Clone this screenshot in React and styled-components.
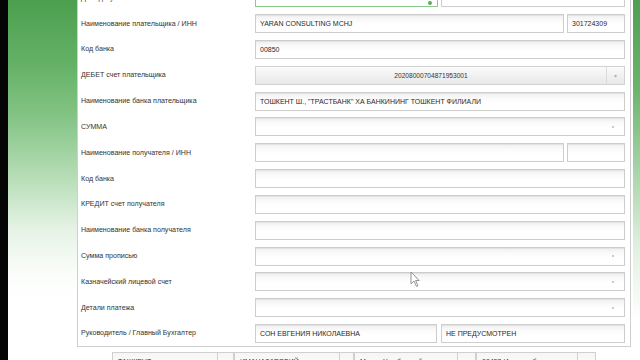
import React from "react";
import styled, { createGlobalStyle } from "styled-components";

const Global = createGlobalStyle`
  html, body { margin: 0; padding: 0; background: #fff; }
  body { width: 640px; height: 360px; overflow: hidden; font-family: "Liberation Sans", Arial, sans-serif; }
`;

const Screen = styled.div`
  position: relative;
  display: flex;
  width: 640px;
  height: 360px;
  overflow: hidden;
  background: #fff;
`;

const BlackEdge = styled.div`
  width: 8px;
  flex: none;
  background: #050505;
`;

const Sidebar = styled.div`
  width: 69px;
  flex: none;
  background: linear-gradient(180deg, #4c9f4f 0px, #62b064 60px, #86c587 120px, #b9deb9 180px, #e6f3e6 230px, #fbfdfb 275px, #ffffff 300px);
`;

const RightEdge = styled.div`
  width: 7px;
  flex: none;
  background: linear-gradient(180deg, #4f9f52 0px, #6db46f 90px, #a6d5a7 170px, #e2f1e2 250px, #ffffff 320px);
`;

const Main = styled.div`
  flex: 1;
  display: flex;
  flex-direction: column;
  min-width: 0;
`;

const Panel = styled.div`
  margin-top: -15.2px;
  margin-right: 2px;
  border: 1px solid #cfcfcf;
  border-top: none;
  padding: 0 5px 0 3px;
  display: grid;
  grid-auto-rows: 25.83px;
  background: #fff;
`;

const Row = styled.div`
  display: grid;
  grid-template-columns: 174px 1fr;
  align-items: center;
`;

const Label = styled.div`
  font-size: 7.1px;
  color: #333;
  white-space: nowrap;
`;

const Fields = styled.div`
  display: flex;
  gap: ${(p) => p.$gap || 3}px;
  height: 19px;
`;

const Input = styled.div`
  flex: ${(p) => (p.$w ? `0 0 ${p.$w}px` : "1")};
  box-sizing: border-box;
  height: 19px;
  display: flex;
  align-items: center;
  justify-content: space-between;
  padding: 0 10px 0 4px;
  border: 1px solid ${(p) => (p.$focus ? "#8cc98c" : "#cdcdcd")};
  background: linear-gradient(180deg, #efefef 0px, #fafafa 5px, #ffffff 10px);
  box-shadow: inset 0 1px 1px rgba(0, 0, 0, 0.06);
  font-size: 7px;
  color: #2a2a2a;
  white-space: nowrap;
  overflow: hidden;
`;

const Mark = styled.span`
  width: 2px;
  height: 2px;
  border-radius: 50%;
  background: #b8b8b8;
  flex: none;
`;

const GreenDot = styled.span`
  width: 4px;
  height: 4px;
  border-radius: 50%;
  background: #5aae5a;
  flex: none;
  margin-right: -5px;
  align-self: flex-end;
  margin-bottom: 1px;
`;

const Select = styled.div`
  flex: 1;
  box-sizing: border-box;
  height: 19px;
  display: flex;
  border: 1px solid #d2d2d2;
  background: linear-gradient(180deg, #fbfbfb 0%, #f1f1f1 50%, #e8e8e8 100%);
  font-size: 6.6px;
  color: #333;
`;

const SelectText = styled.div`
  flex: 1;
  display: flex;
  align-items: center;
  justify-content: center;
`;

const Arrow = styled.div`
  width: 17px;
  border-left: 1px solid #dcdcdc;
  display: flex;
  align-items: center;
  justify-content: center;
  font-size: 6px;
  color: #b0b0b0;
`;

const BottomBar = styled.div`
  display: flex;
  padding: 5px 0 0 35px;
`;

const Combo = styled.div`
  display: flex;
  width: ${(p) => p.$w}px;
  height: 20px;
  box-sizing: border-box;
  border: 1px solid #d0d0d0;
  border-right: none;
  background: linear-gradient(180deg, #f6f6f6, #ffffff);
  font-size: 7px;
  color: #333;
`;

const ComboText = styled.div`
  flex: 1;
  padding: 5px 0 0 5px;
  white-space: nowrap;
  overflow: hidden;
`;

const ComboArrow = styled.div`
  width: ${(p) => p.$w}px;
  border-left: 1px solid #d0d0d0;
  border-right: 1px solid #d0d0d0;
`;

const Cursor = styled.svg`
  position: absolute;
  left: 410px;
  top: 271px;
`;

const rows = [
  { label: "Дата документа", fields: [{ w: 183, focus: true, dot: true }, { text: "" }] },
  { label: "Наименование плательщика / ИНН", fields: [{ text: "YARAN CONSULTING MCHJ" }, { w: 58, text: "301724309" }] },
  { label: "Код банка", fields: [{ text: "00850" }] },
  { label: "ДЕБЕТ счет плательщика", select: "20208000704871953001" },
  { label: "Наименование банка плательщика", fields: [{ text: "ТОШКЕНТ Ш., \"ТРАСТБАНК\" ХА БАНКИНИНГ ТОШКЕНТ ФИЛИАЛИ" }] },
  { label: "СУММА", fields: [{ mark: true }] },
  { label: "Наименование получателя / ИНН", fields: [{}, { w: 58 }] },
  { label: "Код банка", fields: [{}] },
  { label: "КРЕДИТ счет получателя", fields: [{}] },
  { label: "Наименование банка получателя", fields: [{}] },
  { label: "Сумма прописью", fields: [{ mark: true }] },
  { label: "Казначейский лицевой счет", fields: [{ mark: true }] },
  { label: "Детали платежа", fields: [{ mark: true }] },
  { label: "Руководитель / Главный Бухгалтер", gap: 4, fields: [{ w: 182, text: "СОН ЕВГЕНИЯ НИКОЛАЕВНА" }, { text: "НЕ ПРЕДУСМОТРЕН" }] },
];

const combos = [
  { w: 122, a: 15, text: "ТАШКЕНТ" },
  { w: 120, a: 13, text: "ИМАНАЗАРОВИЙ" },
  { w: 122, a: 17, text: "Мирзо-Улугбекский" },
  { w: 120, a: 17, text: "00452 Ипотека-банк" },
];

export default function App() {
  return (
    <Screen>
      <Global />
      <BlackEdge />
      <Sidebar />
      <Main>
        <Panel>
          {rows.map((r, i) => (
            <Row key={i}>
              <Label>{r.label}</Label>
              {r.select ? (
                <Fields>
                  <Select>
                    <SelectText>{r.select}</SelectText>
                    <Arrow>▾</Arrow>
                  </Select>
                </Fields>
              ) : (
                <Fields $gap={r.gap}>
                  {r.fields.map((f, j) => (
                    <Input key={j} $w={f.w} $focus={f.focus}>
                      <span>{f.text}</span>
                      {f.mark && <Mark />}
                      {f.dot && <GreenDot />}
                    </Input>
                  ))}
                </Fields>
              )}
            </Row>
          ))}
        </Panel>
        <BottomBar>
          {combos.map((c, i) => (
            <Combo key={i} $w={c.w}>
              <ComboText>{c.text}</ComboText>
              <ComboArrow $w={c.a} />
            </Combo>
          ))}
        </BottomBar>
      </Main>
      <RightEdge />
      <Cursor width="10" height="17" viewBox="0 0 10 17">
        <path d="M1 1 L1 13 L4 10 L6.5 15.5 L8 14.8 L5.6 9.5 L9.2 9.5 Z" fill="#fff" stroke="#888" strokeWidth="0.9" strokeLinejoin="round" />
      </Cursor>
    </Screen>
  );
}
